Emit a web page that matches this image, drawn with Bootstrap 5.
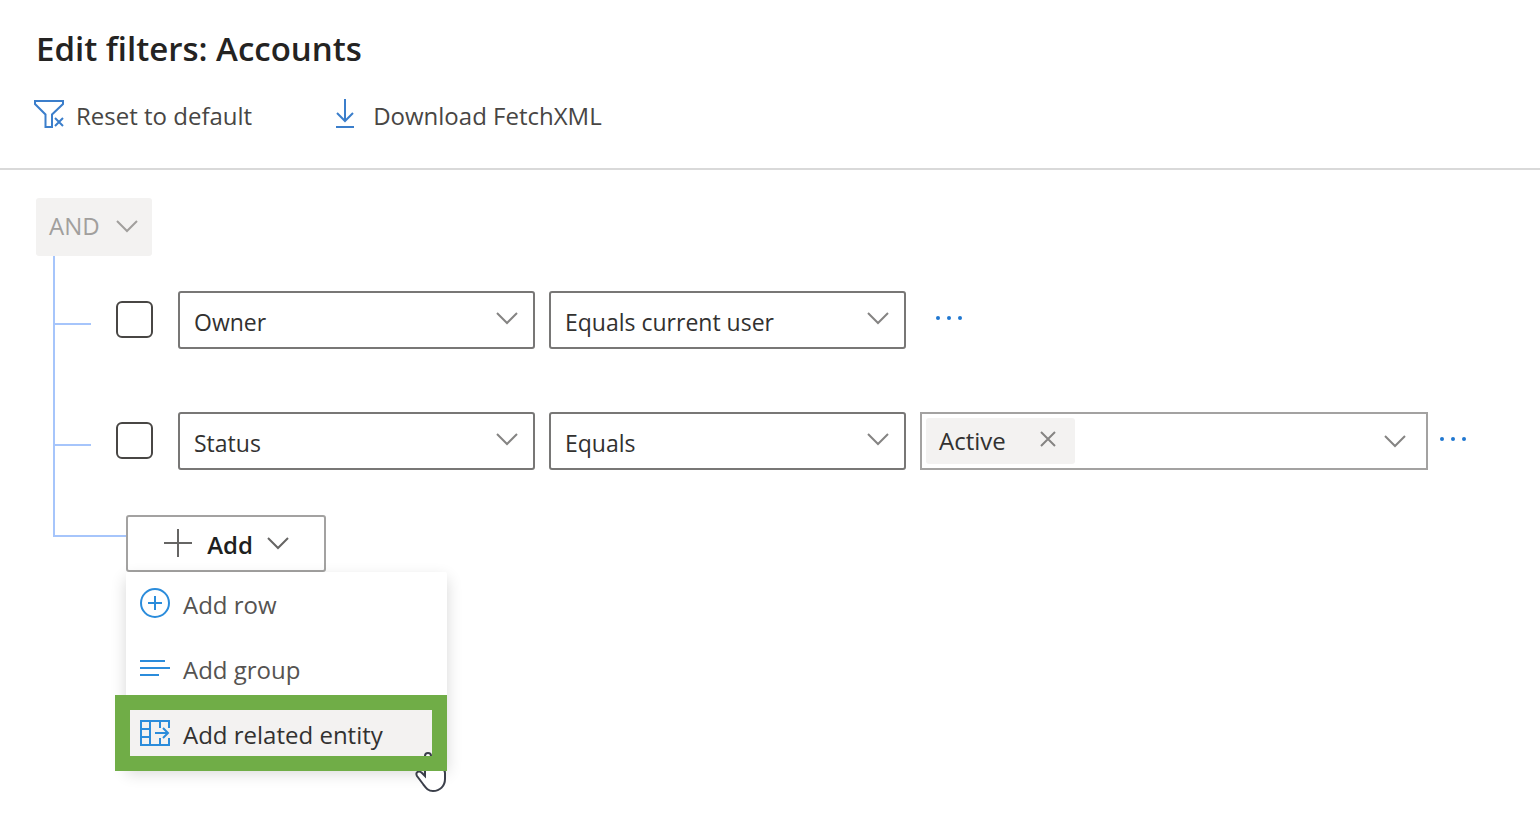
<!DOCTYPE html>
<html lang="en">
<head>
<meta charset="utf-8">
<meta name="viewport" content="width=device-width, initial-scale=1">
<title>Edit filters: Accounts</title>
<link href="https://cdn.jsdelivr.net/npm/bootstrap@5.3.0/dist/css/bootstrap.min.css" rel="stylesheet">
<style>
  :root { --ink: #323130; --tree: #a6c5fb; --accent: #1f77d0; --tile: #f3f2f1; }
  body { font-family: "Open Sans", "Noto Sans", sans-serif; font-size: 24px; line-height: 32px; color: var(--ink); background: #fff; }
  svg { display: block; fill: none; flex: none; }
  button, select, input { color: inherit; }
  .page-head { padding: 25px 34px 35px; border-bottom: 2px solid #d9d9d9; }
  .page-title { font-size: 33px; line-height: 48px; font-weight: 600; color: #242322; margin: 0 0 26px 2px; }
  .cmd { padding: 0; border: 0; font-size: 24px; line-height: 34px; color: #484644; display: inline-flex; align-items: center; }
  .cmd svg { color: #3b7ecb; }
  .toolbar-cmds { gap: 81px; }
  .editor { padding: 28px 72px 0 36px; }
  .op-btn { height: 58px; padding: 0 14px 2px 13px; border: 0; border-radius: 3px; background: var(--tile); color: #a19f9d; gap: 16px; }
  .tree { margin-left: 17px; }
  .tree-rows { border-left: 2px solid var(--tree); padding: 35px 0 45px; gap: 63px; }
  .stub { width: 36px; height: 2px; background: var(--tree); margin: 8px 25px 0 0; flex: none; }
  .pick { width: 37px; height: 37px; margin: 0 25px 2px 0; border: 2px solid #484644; border-radius: 4px; flex: none; }
  .fields { display: grid; grid-template-columns: 357fr 357fr 508fr; gap: 14px; }
  .field-select { height: 58px; padding: 4px 48px 0 14px; border: 2px solid #787776; border-radius: 3px; font-size: 23px; line-height: 32px; color: var(--ink);
    background-size: 24px 14px; background-position: right 14px top 18px;
    --bs-form-select-bg-img: url("data:image/svg+xml,%3csvg xmlns='http://www.w3.org/2000/svg' viewBox='0 0 24 14'%3e%3cpath fill='none' stroke='%23858483' stroke-width='2' d='M2 2l10 10L22 2'/%3e%3c/svg%3e"); }
  .value-box { height: 58px; border: 2px solid #a3a2a1; padding: 0 19px 0 4px; min-width: 0; }
  .chip { height: 46px; padding: 0 18px 0 13px; background: var(--tile); border-radius: 3px; gap: 33px; }
  .value-input { width: 0; min-width: 0; border: 0; outline: 0; background: transparent; }
  .bare { padding: 0; border: 0; background: none; color: #858483; }
  .more { color: var(--accent); padding: 0 0 4px; }
  .fields > .more { margin-left: 14px; justify-self: start; }
  .row-end { width: 28px; margin-left: 12px; flex: none; }
  .elbow { width: 73px; height: 22px; border: solid var(--tree); border-width: 0 0 2px 2px; }
  .add-btn { width: 200px; height: 57px; border: 2px solid #a3a2a1; border-radius: 3px; font-size: 24px; font-weight: 600; color: #201f1e; padding: 2px 0 0; gap: 14px; }
  .add-menu { top: 100%; left: 0; width: 321px; padding: 0; margin: 0; border: 0; border-radius: 2px; font-size: 24px; box-shadow: 0 6px 16px rgba(0,0,0,.16); }
  .add-menu .dropdown-item { height: 65px; padding: 0 14px; gap: 13px; color: #555351; }
  .add-menu .dropdown-item svg { color: #2b8cdb; margin-bottom: 4px; }
  .add-menu .dropdown-item.current { background: var(--tile); color: var(--ink); }
  .highlight { position: absolute; inset: -7px 0 -4px -11px; border: 15px solid #70ad47; pointer-events: none; }
  .pointer { position: absolute; right: 0; top: 50px; }
</style>
</head>
<body class="min-vh-100">
<header class="page-head">
  <h1 class="page-title">Edit filters: Accounts</h1>
  <div class="toolbar-cmds d-flex" role="toolbar" aria-label="Filter commands">
    <button type="button" class="btn cmd">
      <svg width="30" height="28" class="me-2 mb-1" viewBox="0 0 30 28" stroke="currentColor" stroke-width="2"><path d="M18 27V14.500L29 4V1H1v3l10.500 10.500V27zM21 18l8 8M29 18l-8 8"/></svg>
      <span class="ms-1">Reset to default</span>
    </button>
    <button type="button" class="btn cmd">
      <svg width="24" height="30" class="me-3 mb-1" viewBox="0 0 24 30" stroke="currentColor" stroke-width="2"><path d="M12 0v22M4 14l8 8 8-8M3 28h18"/></svg>
      <span>Download FetchXML</span>
    </button>
  </div>
</header>

<main class="editor">
  <button type="button" class="op-btn d-flex align-items-center" disabled>AND
    <svg width="22" height="14" viewBox="0 0 22 14" stroke="currentColor" stroke-width="2"><path d="M1 2l10 10L21 2"/></svg>
  </button>
  <div class="tree">
    <div class="tree-rows d-flex flex-column">
      <div class="d-flex align-items-center">
        <span class="stub"></span>
        <input type="checkbox" class="form-check-input pick" aria-label="Select Owner row">
        <div class="fields flex-grow-1 align-items-center">
          <select class="form-select field-select" aria-label="Column"><option>Owner</option></select>
          <select class="form-select field-select" aria-label="Operator"><option>Equals current user</option></select>
          <button type="button" class="bare more" aria-label="More commands">
            <svg width="30" height="6" viewBox="0 0 30 6"><g fill="currentColor"><circle cx="4" cy="3" r="2"/><circle cx="15" cy="3" r="2"/><circle cx="26" cy="3" r="2"/></g></svg>
          </button>
        </div>
        <span class="row-end"></span>
      </div>
      <div class="d-flex align-items-center">
        <span class="stub"></span>
        <input type="checkbox" class="form-check-input pick" aria-label="Select Status row">
        <div class="fields flex-grow-1 align-items-center">
          <select class="form-select field-select" aria-label="Column"><option>Status</option></select>
          <select class="form-select field-select" aria-label="Operator"><option>Equals</option></select>
          <div class="value-box d-flex align-items-center">
            <span class="chip d-flex align-items-center">Active
              <button type="button" class="bare" aria-label="Remove Active">
                <svg width="18" height="18" class="mb-1" viewBox="0 0 18 18" stroke="currentColor" stroke-width="2"><path d="M2 2l14 14M16 2L2 16"/></svg>
              </button>
            </span>
            <input type="text" class="value-input flex-grow-1" aria-label="Value">
            <button type="button" class="bare" aria-label="Show values">
              <svg width="24" height="14" viewBox="0 0 24 14" stroke="currentColor" stroke-width="2"><path d="M2 2l10 10L22 2"/></svg>
            </button>
          </div>
        </div>
        <button type="button" class="bare more row-end" aria-label="More commands">
          <svg width="28" height="6" viewBox="0 0 28 6"><g fill="currentColor"><circle cx="2" cy="3" r="2"/><circle cx="13" cy="3" r="2"/><circle cx="24" cy="3" r="2"/></g></svg>
        </button>
      </div>
    </div>
    <div class="d-flex align-items-start">
      <span class="elbow"></span>
      <div class="dropdown">
        <button type="button" class="btn add-btn d-flex align-items-center justify-content-center" aria-expanded="true">
          <svg width="30" height="30" class="mb-1" viewBox="0 0 30 30" stroke="#666564" stroke-width="2"><path d="M15 1v28M1 15h28"/></svg>
          Add
          <svg width="22" height="14" class="mb-1" viewBox="0 0 22 14" stroke="#666564" stroke-width="2"><path d="M1 2l10 10L21 2"/></svg>
        </button>
        <ul class="dropdown-menu add-menu show">
          <li><button type="button" class="dropdown-item d-flex align-items-center">
            <svg width="30" height="30" viewBox="0 0 30 30" stroke="currentColor" stroke-width="2"><circle cx="15" cy="15" r="14"/><path d="M15 8v14M8 15h14"/></svg>
            Add row</button></li>
          <li><button type="button" class="dropdown-item d-flex align-items-center">
            <svg width="30" height="20" viewBox="0 0 30 20" stroke="currentColor" stroke-width="2"><path d="M0 3h25M0 10h30M0 17h19"/></svg>
            Add group</button></li>
          <li class="position-relative"><button type="button" class="dropdown-item current d-flex align-items-center">
            <svg width="30" height="26" viewBox="0 0 30 26" stroke="currentColor" stroke-width="2"><path d="M29 8V1H1v24h28v-7M10 1v24M1 9h9M1 17h9M20 1v7M20 18v7M15 13h13M23 8l5 5-5 5"/></svg>
            Add related entity</button>
            <svg class="pointer" width="32" height="40" viewBox="0 0 32 40" stroke="#3b3f4a" stroke-width="2"><path fill="#fff" d="M10 24V4c0-4 6-4 6 0v9l11 3c2 1 3 2 3 5v6c0 7-5 12-12 12-5 0-7-3-10-7l-6-8c-2-4 2-6 5-3z"/></svg>
            <span class="highlight"></span>
          </li>
        </ul>
      </div>
    </div>
  </div>
</main>
<script src="https://cdn.jsdelivr.net/npm/bootstrap@5.3.0/dist/js/bootstrap.bundle.min.js"></script>
</body>
</html>
